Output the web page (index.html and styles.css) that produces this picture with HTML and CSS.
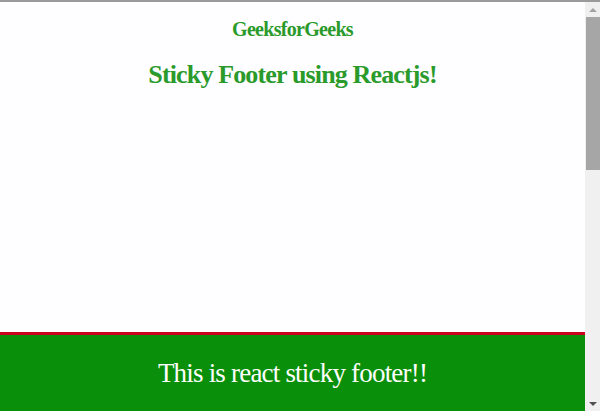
FILE: index.html
```html
<!DOCTYPE html>
<html>
<head>
<meta charset="utf-8">
<link rel="stylesheet" href="styles.css">
</head>
<body>
<div class="window">
  <div class="page">
    <div class="content">
      <h3 class="brand">GeeksforGeeks</h3>
      <h1 class="title">Sticky Footer using Reactjs!</h1>
    </div>
    <footer class="footer">
      <p class="footer-text">This is react sticky footer!!</p>
    </footer>
  </div>
  <div class="scrollbar">
    <div class="arrow up"></div>
    <div class="thumb"></div>
    <div class="track"></div>
    <div class="arrow down"></div>
  </div>
</div>
</body>
</html>
```
FILE: styles.css
```css
html, body {
  margin: 0;
  padding: 0;
  height: 100%;
  overflow: hidden;
}
body {
  font-family: "Liberation Serif", "Times New Roman", serif;
  background: #fefdff;
}
.window {
  display: flex;
  height: 411px;
  box-sizing: border-box;
  border-top: 2px solid #9a9a9a;
}
.page {
  flex: 1;
  display: flex;
  flex-direction: column;
  min-width: 0;
}
.content {
  flex: 1;
  text-align: center;
}
.brand {
  margin: 16px 0 0;
  font-size: 20px;
  line-height: 22px;
  letter-spacing: -0.7px;
  font-weight: bold;
  color: #2a9a2a;
}
.title {
  margin: 20px 0 0;
  font-size: 26px;
  line-height: 30px;
  letter-spacing: -0.85px;
  font-weight: bold;
  color: #2a9a2a;
}
.footer {
  height: 76px;
  border-top: 3px solid #c8001e;
  background: #0a8f0a;
  display: flex;
  align-items: center;
  justify-content: center;
}
.footer-text {
  margin: 0;
  color: #ffffff;
  font-size: 27px;
  letter-spacing: -0.8px;
}
.scrollbar {
  width: 15px;
  display: flex;
  flex-direction: column;
  background: #f0f0f0;
}
.arrow {
  height: 15px;
  display: flex;
  align-items: center;
  justify-content: center;
}
.arrow::before {
  content: "";
  border-left: 4px solid transparent;
  border-right: 4px solid transparent;
}
.arrow.up::before {
  border-bottom: 4px solid #a3a3a3;
}
.arrow.down::before {
  border-top: 4px solid #505050;
}
.thumb {
  height: 153px;
  margin-left: 1px;
  background: #a6a6a6;
}
.track {
  flex: 1;
}
```
